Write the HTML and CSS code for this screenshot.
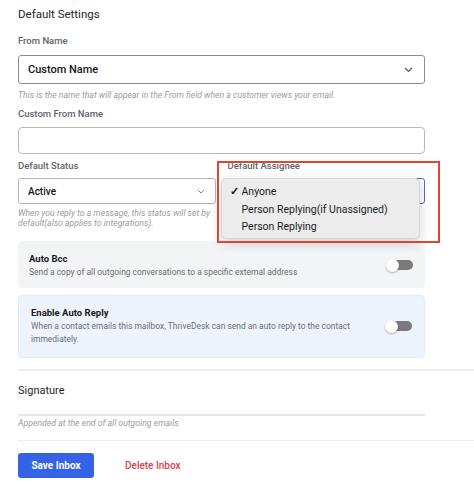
FILE: index.html
```html
<!DOCTYPE html>
<html lang="en">
    <head>
        <meta charset="UTF-8">
        <title>Inbox Settings</title>
        <link rel="stylesheet" href="styles.css">
    </head>
    <body>

        <div class="settings">

            <h2 class="section_title">Default Settings</h2>

            <p class="field_label">From Name</p>
            <div class="select select_lg">
                <span>Custom Name</span>
                <svg class="chevron" width="9" height="6" viewBox="0 0 9 6"><path d="M1 1l3.5 3.5L8 1" fill="none" stroke="#555" stroke-width="1.2"/></svg>
            </div>
            <p class="hint hint_from">This is the name that will appear in the From field when a customer views your email.</p>

            <p class="field_label label_custom">Custom From Name</p>
            <div class="text_input"></div>

            <div class="status_row">
                <div class="col">
                    <p class="field_label label_row">Default Status</p>
                    <div class="select select_sm">
                        <span>Active</span>
                        <svg class="chevron" width="8" height="5" viewBox="0 0 8 5"><path d="M1 1l3 3 3-3" fill="none" stroke="#888" stroke-width="1"/></svg>
                    </div>
                    <p class="hint hint_status">When you reply to a message, this status will set by default(also applies to integrations).</p>
                </div>

                <div class="col col_assignee">
                    <p class="field_label label_row">Default Assignee</p>
                    <div class="select select_sm select_focus"></div>

                    <!-- native select list, opened -->
                    <ul class="dropdown">
                        <li><span class="check">&#10003;</span>Anyone</li>
                        <li>Person Replying(if Unassigned)</li>
                        <li>Person Replying</li>
                    </ul>

                    <!-- highlight box drawn on the screenshot -->
                    <div class="highlight"></div>
                </div>
            </div>

            <div class="card card_grey">
                <div class="card_text">
                    <p class="card_title">Auto Bcc</p>
                    <p class="card_desc">Send a copy of all outgoing conversations to a specific external address</p>
                </div>
                <span class="toggle"></span>
            </div>

            <div class="card card_blue">
                <div class="card_text">
                    <p class="card_title">Enable Auto Reply</p>
                    <p class="card_desc">When a contact emails this mailbox, ThriveDesk can send an auto reply to the contact immediately.</p>
                </div>
                <span class="toggle"></span>
            </div>

            <div class="divider"></div>

            <h2 class="signature_title">Signature</h2>
            <div class="signature_line"></div>
            <p class="hint hint_signature">Appended at the end of all outgoing emails</p>

            <div class="divider divider_bottom"></div>

            <div class="actions">
                <button class="btn_save">Save Inbox</button>
                <button class="btn_delete">Delete Inbox</button>
            </div>

        </div>

    </body>
</html>
```

FILE: styles.css
```css
* {
    margin: 0px;
    padding: 0px;
    box-sizing: border-box;
}

body {
    background-color: white;
    font-family: Roboto, "Liberation Sans", sans-serif;
    color: #222222;
}

.settings {
    padding-top: 5px;
    padding-left: 18px;
}

.section_title {
    font-size: 11.5px;
    font-weight: 400;
    line-height: 18px;
    color: #1f1f1f;
}

.field_label {
    font-size: 9.5px;
    font-weight: 500;
    line-height: 14px;
    color: #5f636b;
    margin-top: 11px;
    margin-bottom: 7px;
}

.label_custom {
    margin-top: 6px;
    margin-bottom: 6px;
}

.label_row {
    margin-top: 0px;
    margin-bottom: 5px;
}

.select {
    display: flex;
    align-items: center;
    justify-content: space-between;
    border: 1px solid #8c8c8c;
    border-radius: 3px;
    background-color: white;
    color: #151515;
    font-weight: 500;
}

.select_lg {
    width: 407px;
    height: 29px;
    padding: 0 11px 0 9px;
    font-size: 11px;
}

.select_sm {
    height: 26px;
    padding: 0 10px 0 9px;
    font-size: 10px;
    border-color: #b5b5b5;
}

.select_focus {
    border-color: #4f6fd0;
}

.hint {
    font-size: 8.7px;
    font-style: italic;
    color: #9c9c9c;
    line-height: 11px;
}

.hint_from {
    margin-top: 6px;
}

.text_input {
    width: 407px;
    height: 27px;
    border: 1px solid #b8b8b8;
    border-radius: 4px;
}

.status_row {
    width: 407px;
    display: grid;
    grid-template-columns: 1fr 1fr;
    column-gap: 12px;
    margin-top: 5px;
}

.hint_status {
    margin-top: 4px;
    line-height: 10px;
}

.col_assignee {
    position: relative;
}

.dropdown {
    position: absolute;
    left: -7px;
    top: 19px;
    width: 199px;
    height: 61px;
    list-style: none;
    padding-top: 4px;
    background-color: #ececec;
    border: 1px solid #d6d6d6;
    border-radius: 5px;
    box-shadow: 0 4px 12px rgba(0, 0, 0, 0.18);
    font-size: 10.5px;
    color: #1c1c1c;
}

.dropdown li {
    line-height: 17.5px;
    padding-left: 20px;
    position: relative;
}

.check {
    position: absolute;
    left: 8px;
    font-size: 11px;
    font-weight: 700;
}

.highlight {
    position: absolute;
    left: -11px;
    top: 2px;
    width: 223px;
    height: 82px;
    border: 2px solid #e2452f;
}

.card {
    width: 407px;
    display: flex;
    align-items: center;
    justify-content: space-between;
    border-radius: 4px;
    padding: 11px 12px 10px 11px;
}

.card_grey {
    margin-top: 13px;
    background-color: #f3f4f6;
}

.card_blue {
    margin-top: 7px;
    padding: 10px 12px 11px 12px;
    background-color: #eef4fd;
    border: 1px solid #e3ebf6;
}

.card_title {
    font-size: 9.5px;
    font-weight: 700;
    line-height: 14px;
    color: #1a1a1a;
}

.card_desc {
    font-size: 8.45px;
    line-height: 12px;
    color: #6b6e75;
}

.card_blue .card_desc {
    line-height: 13px;
    max-width: 345px;
}

.toggle {
    position: relative;
    width: 27px;
    height: 10px;
    flex-shrink: 0;
}

.toggle::after {
    content: "";
    position: absolute;
    right: 0;
    top: 0;
    width: 21px;
    height: 10px;
    border-radius: 5px;
    background-color: #7a7a7a;
}

.toggle::before {
    content: "";
    position: absolute;
    left: 0;
    top: -1.5px;
    width: 13px;
    height: 13px;
    border-radius: 50%;
    background-color: white;
    box-shadow: 0 1px 2px rgba(0, 0, 0, 0.3);
    z-index: 1;
}

.divider {
    height: 1.5px;
    background-color: #ececec;
    margin-top: 11px;
}

.signature_title {
    font-size: 11px;
    font-weight: 400;
    line-height: 16px;
    margin-top: 12px;
    color: #1f1f1f;
}

.signature_line {
    width: 407px;
    height: 2px;
    background-color: #e6e6e6;
    margin-top: 15px;
}

.hint_signature {
    margin-top: 2px;
}

.divider_bottom {
    margin-top: 11px;
}

.actions {
    display: flex;
    align-items: center;
    gap: 31px;
    margin-top: 12px;
}

.btn_save {
    width: 76px;
    height: 25px;
    border: none;
    border-radius: 3px;
    background-color: #3563e6;
    color: white;
    font-family: Roboto, "Liberation Sans", sans-serif;
    font-size: 10px;
    font-weight: 700;
}

.btn_delete {
    border: none;
    background: none;
    color: #d8424a;
    font-family: Roboto, "Liberation Sans", sans-serif;
    font-size: 10px;
    font-weight: 500;
}
```
